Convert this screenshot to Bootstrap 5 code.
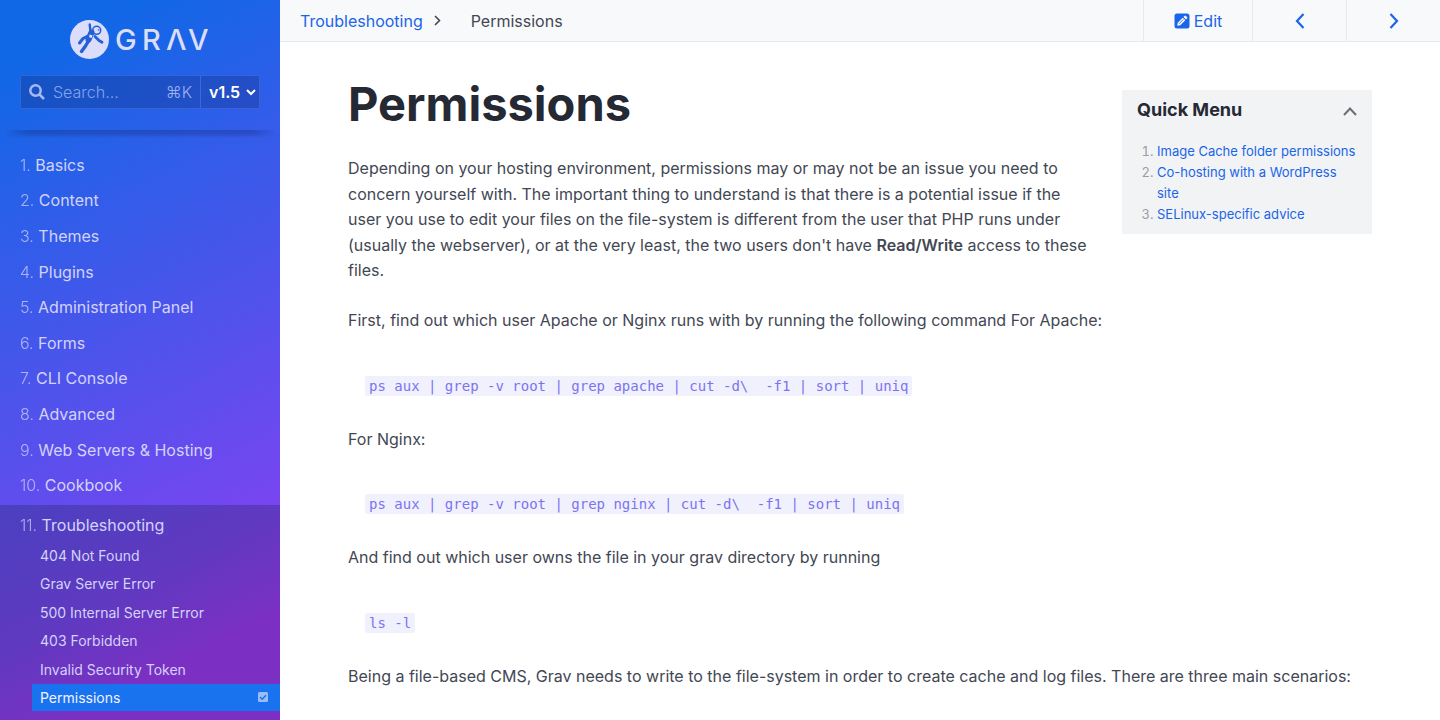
<!DOCTYPE html>
<html lang="en">
<head>
<meta charset="utf-8">
<meta name="viewport" content="width=device-width, initial-scale=1">
<title>Permissions | Grav Documentation</title>
<link href="https://cdn.jsdelivr.net/npm/bootstrap@5.3.0/dist/css/bootstrap.min.css" rel="stylesheet">
<style>
:root { --ui: Inter, "Liberation Sans", sans-serif; --blue: #1a65e8; }
body { font-family: var(--ui); font-size: 16px; line-height: 1.5; color: #424753; background: #fff; }
a { color: var(--blue); text-decoration: none; }
.side { width: 280px; height: 100vh; top: 0; background: linear-gradient(152deg, #1068e6 8%, #7845f0 75%, #9e38f2 88%); }
.side-head { height: 130px; padding: 18px 20px 0; position: relative; }
.side-head::after { content: ""; position: absolute; left: 4px; right: 4px; top: 100%; height: 8px; background: linear-gradient(rgba(20,40,120,.36) 0, rgba(20,40,120,.28) 50%, rgba(20,40,120,0) 100%); -webkit-mask-image: linear-gradient(90deg, transparent, #000 24px, #000 calc(100% - 24px), transparent); }
.brand-mark { height: 42px; margin-bottom: 15px; }
.finder { height: 34px; background: rgba(20,40,120,.3); border: 1px solid rgba(120,150,255,.28); border-radius: 1px; color: #9fb2f3; }
.finder input { background: none; border: 0; outline: 0; color: #dde; width: 80px; font-weight: 300; padding: 0; }
.finder input::placeholder { color: #86a3ec; opacity: 1; }
.finder kbd { background: none; color: #9fb2f3; font: 300 16px var(--ui); padding: 0; }
.finder select { width: 59px; background: transparent; border: 0; border-left: 1px solid rgba(120,150,255,.35); color: #fff; font-weight: 600; padding: 0 0 0 4px; }
.chapters { min-height: 356px; margin: 17px 0 2px; }
.side a { color: #d3d3fa; font-weight: 400; }
.side .num { color: #d9d9fb; opacity: .7; font-weight: 300; }
.chapter-open { background: rgba(15,20,40,.23); padding-top: 8px; }
.topics { min-height: 169px; margin: 5px 0 0 32px; font-size: 14px; }
.topics a { height: 27px; padding: 0 12px 0 8px; }
.topics a.here { background: #1a73ee; color: #f2f2ff; }
.topbar { min-height: 42px; background: #f8f9fb; border-bottom: 1px solid #e6e9ed; padding-left: 20px; }
.crumb-sep { margin: 0 30px 0 11px; }
.tool { width: 94px; border-left: 1px solid #e6e9ed; }
.tool.edit { width: 109px; }
.page { padding: 32px 68px 24px; }
h1 { font-size: 47px; line-height: 60px; font-weight: 700; color: #242933; margin: 0 0 22px; }
.page p { margin: 0 0 24px; line-height: 1.6; }
.page p:last-child { margin: 0; }
.page strong { font-weight: 600; }
.page pre { margin: 24px 0 11px; padding: 16px 17px; overflow: visible; font-size: 14px; line-height: 26px; }
.page pre code { font: 14px "DejaVu Sans Mono", monospace; color: #7b74f1; background: #f1f0fd; border-radius: 2px; padding: 2px 4px; }
.toc-box { float: right; width: 250px; background: #f2f3f5; margin: 16px 0 16px 28px; padding: 5px 15px 9px; }
.toc-box h2 { font-size: 18px; line-height: 30px; font-weight: 700; color: #242933; margin: 0; }
.toc-box ol { margin: 16px 0 0; padding-left: 20px; font-size: 13px; line-height: 21px; color: #9a9da5; }
</style>
</head>
<body>
<div class="d-flex align-items-start">
  <nav class="side sticky-top flex-shrink-0 overflow-hidden" aria-label="Chapters">
    <div class="side-head">
      <a href="#" class="brand-mark d-flex justify-content-center" aria-label="Grav">
        <svg width="142" height="42" viewBox="0 0 142 42">
          <circle cx="20.500" cy="21.500" r="19.500" fill="#dcdcfb"/>
          <g fill="none" stroke="#2160d8" stroke-linecap="round" stroke-linejoin="round">
            <path d="M20.700 6.500l.8 7" stroke-width="2.400"/>
            <path d="M26 18.500l4 4 3 1.800" stroke-width="2.800"/>
            <path d="M22.500 14.500l-3 7" stroke-width="6"/>
            <path d="M19 18l-5 2.500-3.500 4.500" stroke-width="3"/>
            <path d="M19.500 23l-3 5-4 5.500" stroke-width="3.400"/>
            <circle cx="27.700" cy="12.300" r="4" stroke-width="1.600"/>
          </g>
          <circle cx="29.500" cy="12" r=".8" fill="#2160d8"/>
          <path d="M20.500 16.500l3 .8-.8 2.700-2.700-.8z" fill="#dcdcfb"/>
          <text x="46 73 97 119" y="32" font-family="Inter, sans-serif" font-size="29" font-weight="500" fill="#dcdcfb">GRΛV</text>
        </svg>
      </a>
      <div class="finder d-flex align-items-stretch">
        <label class="d-flex align-items-center flex-fill ps-2 pe-2">
          <svg width="16" height="16" viewBox="0 0 16 16" fill="none" stroke="#a9b8f5" stroke-width="2.500" aria-hidden="true"><circle cx="6.500" cy="6.500" r="5.200"/><path d="M10.500 10.500l4.500 4.500"/></svg>
          <input type="search" placeholder="Search..." aria-label="Search" class="ms-2 flex-fill">
          <kbd>⌘K</kbd>
        </label>
        <select aria-label="Version"><option>v1.5</option><option>v1.6</option></select>
      </div>
    </div>
    <ul class="chapters list-unstyled d-flex flex-column">
      <li class="flex-fill d-flex"><a class="flex-fill px-3 mx-1 d-flex align-items-center" href="#"><span><span class="num">1.</span> Basics</span></a></li>
      <li class="flex-fill d-flex"><a class="flex-fill px-3 mx-1 d-flex align-items-center" href="#"><span><span class="num">2.</span> Content</span></a></li>
      <li class="flex-fill d-flex"><a class="flex-fill px-3 mx-1 d-flex align-items-center" href="#"><span><span class="num">3.</span> Themes</span></a></li>
      <li class="flex-fill d-flex"><a class="flex-fill px-3 mx-1 d-flex align-items-center" href="#"><span><span class="num">4.</span> Plugins</span></a></li>
      <li class="flex-fill d-flex"><a class="flex-fill px-3 mx-1 d-flex align-items-center" href="#"><span><span class="num">5.</span> Administration Panel</span></a></li>
      <li class="flex-fill d-flex"><a class="flex-fill px-3 mx-1 d-flex align-items-center" href="#"><span><span class="num">6.</span> Forms</span></a></li>
      <li class="flex-fill d-flex"><a class="flex-fill px-3 mx-1 d-flex align-items-center" href="#"><span><span class="num">7.</span> CLI Console</span></a></li>
      <li class="flex-fill d-flex"><a class="flex-fill px-3 mx-1 d-flex align-items-center" href="#"><span><span class="num">8.</span> Advanced</span></a></li>
      <li class="flex-fill d-flex"><a class="flex-fill px-3 mx-1 d-flex align-items-center" href="#"><span><span class="num">9.</span> Web Servers &amp; Hosting</span></a></li>
      <li class="flex-fill d-flex"><a class="flex-fill px-3 mx-1 d-flex align-items-center" href="#"><span><span class="num">10.</span> Cookbook</span></a></li>
    </ul>
    <div class="chapter-open pb-5">
      <a class="d-block px-3 mx-1" href="#"><span class="num">11.</span> Troubleshooting</a>
      <ul class="topics list-unstyled d-flex flex-column justify-content-between">
        <li><a class="d-flex align-items-center" href="#">404 Not Found</a></li>
        <li><a class="d-flex align-items-center" href="#">Grav Server Error</a></li>
        <li><a class="d-flex align-items-center" href="#">500 Internal Server Error</a></li>
        <li><a class="d-flex align-items-center" href="#">403 Forbidden</a></li>
        <li><a class="d-flex align-items-center" href="#">Invalid Security Token</a></li>
        <li><a class="here d-flex align-items-center justify-content-between" href="#" aria-current="page">Permissions
          <svg width="10" height="10" viewBox="0 0 10 10" aria-hidden="true"><rect width="10" height="10" rx="1.500" fill="#9cbcf6"/><path d="M2 5l2.200 2.200L8 3.200" fill="none" stroke="#1a73ee" stroke-width="1.500"/></svg></a></li>
      </ul>
    </div>
  </nav>

  <main class="flex-fill">
    <header class="topbar d-flex align-items-stretch">
      <nav class="d-flex align-items-center me-auto" aria-label="Breadcrumb">
        <a href="#">Troubleshooting</a>
        <svg class="crumb-sep" width="7" height="11" viewBox="0 0 7 11" fill="none" stroke="#424753" stroke-width="1.600" aria-hidden="true"><path d="M1 1l4.500 4.500L1 10"/></svg>
        <span>Permissions</span>
      </nav>
      <a href="#" class="tool edit d-flex align-items-center justify-content-center gap-1">
        <svg width="16" height="16" viewBox="0 0 16 16" aria-hidden="true"><rect x=".5" y=".5" width="15" height="15" rx="2.500" fill="#1a65e8"/><path d="M3.300 12.700l.4-3 5-5 2.600 2.600-5 5zM9.400 4l1-1c.5-.5 1-.5 1.500 0l1.100 1.100c.5.5.5 1 0 1.500l-1 1z" fill="#f8f9fb"/><path d="M5 10.800l4.300-4.300" stroke="#1a65e8" stroke-width=".8"/></svg>
        Edit</a>
      <a href="#" class="tool d-flex align-items-center justify-content-center" aria-label="Previous page"><svg width="10" height="16" viewBox="0 0 10 16" fill="none" stroke="#1a65e8" stroke-width="2.200"><path d="M8.500 1L2 8l6.500 7"/></svg></a>
      <a href="#" class="tool d-flex align-items-center justify-content-center" aria-label="Next page"><svg width="10" height="16" viewBox="0 0 10 16" fill="none" stroke="#1a65e8" stroke-width="2.200"><path d="M1.500 1L8 8l-6.500 7"/></svg></a>
    </header>
    <article class="page">
      <aside class="toc-box">
        <div class="d-flex align-items-center justify-content-between">
          <h2>Quick Menu</h2>
          <button type="button" class="btn p-0 border-0 lh-1" aria-label="Collapse quick menu"><svg width="14" height="9" viewBox="0 0 14 9" fill="none" stroke="#6b6f79" stroke-width="2"><path d="M1 8l6-6.500L13 8"/></svg></button>
        </div>
        <ol>
          <li><a href="#">Image Cache folder permissions</a></li>
          <li><a href="#">Co-hosting with a WordPress site</a></li>
          <li><a href="#">SELinux-specific advice</a></li>
        </ol>
      </aside>
      <h1>Permissions</h1>
      <p>Depending on your hosting environment, permissions may or may not be an issue you need to concern yourself with. The important thing to understand is that there is a potential issue if the user you use to edit your files on the file-system is different from the user that PHP runs under (usually the webserver), or at the very least, the two users don't have <strong>Read/Write</strong> access to these files.</p>
      <p>First, find out which user Apache or Nginx runs with by running the following command For Apache:</p>
      <pre><code>ps aux | grep -v root | grep apache | cut -d\  -f1 | sort | uniq</code></pre>
      <p>For Nginx:</p>
      <pre><code>ps aux | grep -v root | grep nginx | cut -d\  -f1 | sort | uniq</code></pre>
      <p>And find out which user owns the file in your grav directory by running</p>
      <pre><code>ls -l</code></pre>
      <p>Being a file-based CMS, Grav needs to write to the file-system in order to create cache and log files. There are three main scenarios:</p>
    </article>
  </main>
</div>
<script src="https://cdn.jsdelivr.net/npm/bootstrap@5.3.0/dist/js/bootstrap.bundle.min.js"></script>
</body>
</html>
